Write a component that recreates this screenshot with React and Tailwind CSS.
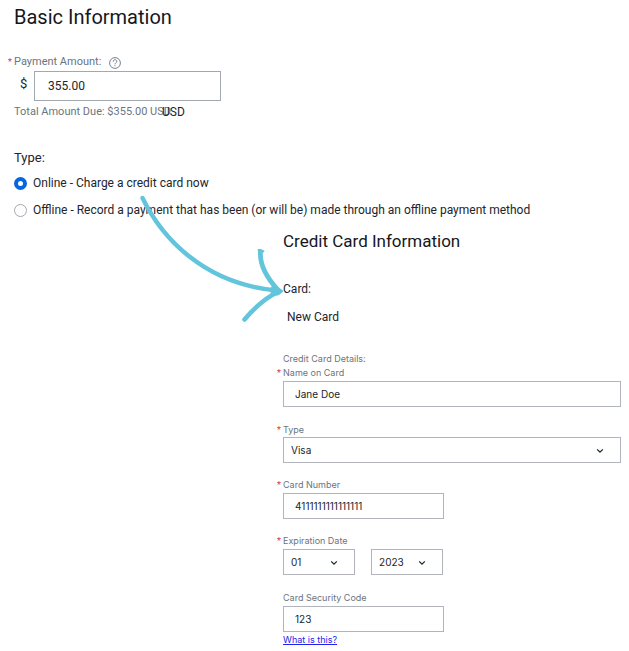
import { useState } from 'react';

function Label({ htmlFor, required, className = '', children }) {
  return (
    <label htmlFor={htmlFor} className={`-ml-1.5 flex text-[#6b7480] ${className}`}>
      <span className="w-1.5 shrink-0 font-[Roboto,sans-serif] text-[9px] text-[#e0341f]">
        {required ? '*' : ''}
      </span>
      {children}
    </label>
  );
}

function Select({ id, label, value, onChange, options, className = '' }) {
  return (
    <div className={`relative ${className}`}>
      <select
        id={id}
        aria-label={label}
        value={value}
        onChange={(e) => onChange(e.target.value)}
        className="block h-[26px] w-full appearance-none border border-[#b1b5bb] bg-white px-[7px] font-[Inter,sans-serif] text-[10px] text-[#22252b]"
      >
        {options.map((o) => (
          <option key={o}>{o}</option>
        ))}
      </select>
      <svg
        viewBox="0 0 8 6"
        className="pointer-events-none absolute top-[11px] right-[17px] h-1.5 w-2"
        fill="none"
        stroke="#22252b"
        strokeWidth="1.3"
      >
        <path d="M1.2 1.4 4 4.200l2.800-2.800" />
      </svg>
    </div>
  );
}

function Radio({ name, value, checked, onChange, children }) {
  return (
    <label className="flex items-center gap-1.5 text-[12px] leading-4 text-[#22252b]">
      <input
        type="radio"
        name={name}
        value={value}
        checked={checked}
        onChange={() => onChange(value)}
        className="size-[13px] shrink-0 appearance-none rounded-full border border-[#a3a7af] bg-white checked:border-4 checked:border-[#0368e1]"
      />
      {children}
    </label>
  );
}

function Arrow() {
  return (
    <svg
      viewBox="0 0 150 132"
      className="pointer-events-none absolute top-[194px] left-[138px] h-[132px] w-[150px]"
      fill="#62c5db"
      stroke="#62c5db"
      strokeLinecap="round"
      strokeLinejoin="round"
    >
      <path d="M4.500 4C24 44 66 90 139 96.500" strokeWidth="4.400" fill="none" />
      <path d="M122.500 57.500C121.500 70 128 83 140 96" strokeWidth="4.800" fill="none" />
      <path d="M140 98C129 103 118 112 106.500 125.500" strokeWidth="4.600" fill="none" />
      <path d="M120.500 56l5 1.200-3 1.800Z" strokeWidth="2" />
      <path d="M134 93l7 1.500 3.500 2.700-4 3.300-7.500 1Z" strokeWidth="1.500" />
    </svg>
  );
}

const small = 'font-[Inter,sans-serif] text-[9px] leading-[14px]';
const input =
  'block h-[26px] border border-[#b1b5bb] bg-white px-[11px] font-[Inter,sans-serif] text-[10px] text-[#22252b]';

export default function App() {
  const [amount, setAmount] = useState('355.00');
  const [method, setMethod] = useState('online');
  const [name, setName] = useState('Jane Doe');
  const [cardType, setCardType] = useState('Visa');
  const [number, setNumber] = useState('4111111111111111');
  const [month, setMonth] = useState('01');
  const [year, setYear] = useState('2023');
  const [code, setCode] = useState('123');

  return (
    <main className="relative bg-white font-[Roboto,sans-serif] text-[#22252b]">
      <section className="px-3.5 pt-[3px]">
        <h1 className="text-[20px] leading-7 text-[#15171c]">Basic Information</h1>

        <div className="mt-[22px] flex items-center gap-2">
          <Label htmlFor="amount" required className="text-[11px] leading-[18px]">
            Payment Amount:
          </Label>
          <button type="button" aria-label="Help" className="mt-0.5">
            <svg viewBox="0 0 12 12" className="size-3" fill="none" stroke="#6b7480" strokeWidth="0.9">
              <circle cx="6" cy="6" r="5.400" />
              <path d="M4.200 4.700C4.200 3.400 5 2.700 6 2.700s1.800.7 1.800 1.700C7.800 5.700 6 5.800 6 7.300M6 8.200v1.100" />
            </svg>
          </button>
        </div>
        <div className="flex">
          <span className="w-5 pl-1.5 text-[13px] leading-[26px]">$</span>
          <input
            id="amount"
            value={amount}
            onChange={(e) => setAmount(e.target.value)}
            className="h-[30px] w-[187px] border border-[#a3a7af] bg-white px-[13px] text-[12px]"
          />
        </div>
        <p className="relative mt-0.5 text-[11px] leading-[18px] text-[#6b7480]">
          Total Amount Due: $355.00 USD
          <span className="absolute top-0 left-[148px] text-[12px] text-[#22252b]">USD</span>
        </p>

        <fieldset className="mt-[27px]">
          <legend className="text-[13px] leading-5">Type:</legend>
          <div className="mt-[7px] flex flex-col gap-[11px]">
            <Radio name="method" value="online" checked={method === 'online'} onChange={setMethod}>
              Online - Charge a credit card now
            </Radio>
            <Radio name="method" value="offline" checked={method === 'offline'} onChange={setMethod}>
              Offline - Record a payment that has been (or will be) made through an offline payment method
            </Radio>
          </div>
        </fieldset>
      </section>

      <section className="mr-2 ml-[45%] pt-[11px] pb-1">
        <h2 className="text-[17px] leading-6 text-[#15171c]">Credit Card Information</h2>
        <h3 className="mt-7 text-[12px] leading-4">Card:</h3>
        <p className="mt-3 pl-1 text-[12px] leading-4">New Card</p>

        <p className={`mt-[27px] text-[#6b7480] ${small}`}>Credit Card Details:</p>
        <Label htmlFor="name" required className={small}>
          Name on Card
        </Label>
        <input
          id="name"
          value={name}
          onChange={(e) => setName(e.target.value)}
          className={`mt-px w-full ${input}`}
        />

        <Label htmlFor="type" required className={`mt-4 ${small}`}>
          Type
        </Label>
        <Select
          id="type"
          value={cardType}
          onChange={setCardType}
          options={['Visa', 'MasterCard', 'American Express', 'Discover']}
          className="w-full"
        />

        <Label htmlFor="number" required className={`mt-[15px] ${small}`}>
          Card Number
        </Label>
        <input
          id="number"
          value={number}
          onChange={(e) => setNumber(e.target.value)}
          className={`mt-px w-[161px] ${input}`}
        />

        <Label htmlFor="month" required className={`mt-[15px] ${small}`}>
          Expiration Date
        </Label>
        <div className="mt-px flex gap-4">
          <Select
            id="month"
            value={month}
            onChange={setMonth}
            options={['01', '02', '03', '04', '05', '06', '07', '08', '09', '10', '11', '12']}
            className="w-[72px]"
          />
          <Select
            id="year"
            label="Expiration year"
            value={year}
            onChange={setYear}
            options={['2023', '2024', '2025', '2026', '2027']}
            className="w-[72px]"
          />
        </div>

        <Label htmlFor="code" className={`mt-4 ${small}`}>
          Card Security Code
        </Label>
        <input
          id="code"
          value={code}
          onChange={(e) => setCode(e.target.value)}
          className={`mt-px w-[161px] ${input}`}
        />
        <a href="#code" className={`mt-px block w-fit text-[#2222ee] underline ${small}`}>
          What is this?
        </a>
      </section>

      <Arrow />
    </main>
  );
}
